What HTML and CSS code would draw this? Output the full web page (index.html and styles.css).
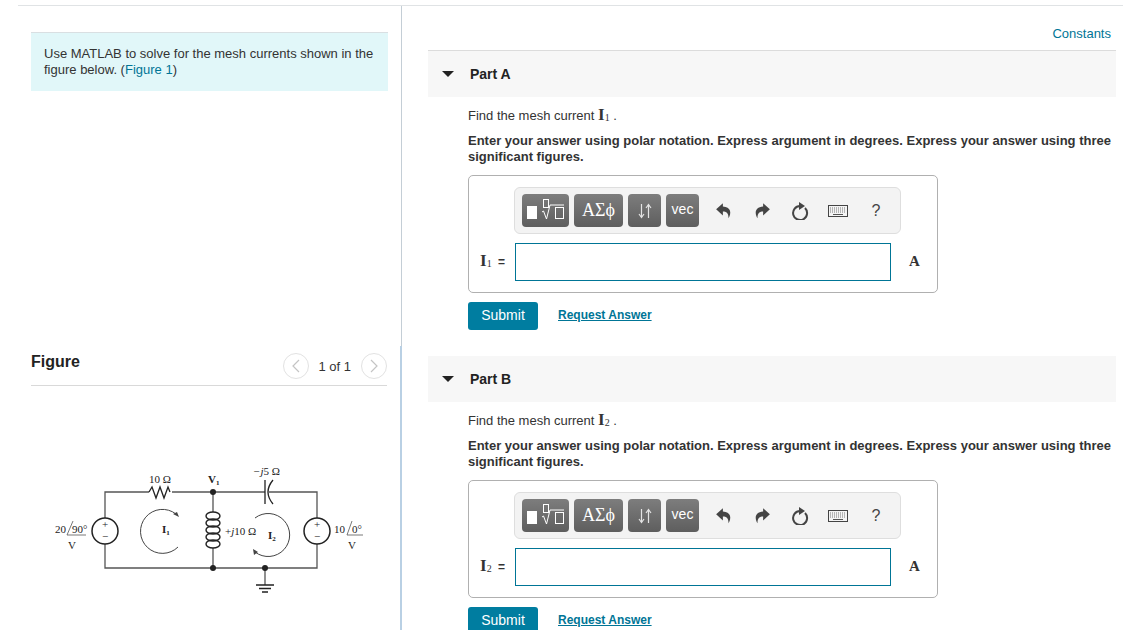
FILE: index.html
```html
<!DOCTYPE html>
<html lang="en">
<head>
  <meta charset="UTF-8" />
  <title>Mesh currents</title>
  <link rel="stylesheet" href="styles.css">
</head>
<body>
  <svg class="sprites" width="0" height="0">
    <defs>
      <symbol id="templates" viewBox="0 0 47 33">
        <rect x="5" y="12" width="10" height="13" fill="#fff"/>
        <rect x="21.500" y="5.500" width="5" height="8" fill="none" stroke="#fff"/>
        <path d="M20 18l1.500-1 3 8 3.500-14h14" fill="none" stroke="#fff"/>
        <rect x="33.500" y="13.500" width="8" height="11" fill="none" stroke="#fff"/>
      </symbol>
      <symbol id="arrows" viewBox="0 0 14 16">
        <path d="M3.500 1v13M1 11l2.500 3.500L6 11M10.500 15V2M8 5l2.500-3.500L13 5" fill="none" stroke="#e4e4e4" stroke-width="1.200"/>
      </symbol>
      <symbol id="undo" viewBox="0 0 16 16">
        <path d="M7 1 1 6.500 7 12V8.500c3 0 5 1 5 6 3-5 2-10-5-10.500z" fill="#444"/>
      </symbol>
      <symbol id="redo" viewBox="0 0 16 16">
        <path d="M9 1l6 5.500L9 12V8.500c-3 0-5 1-5 6-3-5-2-10 5-10.500z" fill="#444"/>
      </symbol>
      <symbol id="reset" viewBox="0 0 18 18">
        <path d="M9 4a7 7 0 1 0 5 2" fill="none" stroke="#444" stroke-width="2"/>
        <path d="M8 0v8l6-4z" fill="#444"/>
      </symbol>
      <symbol id="keyboard" viewBox="0 0 20 12">
        <rect x=".5" y=".5" width="19" height="11" fill="#f4f4f4" stroke="#444"/>
        <path d="M2 3h16M2 5h16M2 7h16" stroke="#777" stroke-dasharray="1 1"/>
        <path d="M5 9.500h10" stroke="#555"/>
      </symbol>
      <symbol id="chev-left" viewBox="0 0 8 14">
        <path d="M7 1 1 7l6 6" fill="none" stroke="#c4c4c4" stroke-width="1.200"/>
      </symbol>
      <symbol id="chev-right" viewBox="0 0 8 14">
        <path d="M1 1l6 6-6 6" fill="none" stroke="#c4c4c4" stroke-width="1.200"/>
      </symbol>
    </defs>
  </svg>

  <div class="page">
    <div class="left">
      <div class="intro-pane">
        <p class="intro">Use MATLAB to solve for the mesh currents shown in the figure below. (<a href="#">Figure 1</a>)</p>
      </div>
      <div class="figure-pane">
        <div class="figure-head">
          <h2>Figure</h2>
          <div class="pager">
            <span class="page-btn"><svg width="8" height="14"><use href="#chev-left"/></svg></span>
            <span class="page-count">1 of 1</span>
            <span class="page-btn"><svg width="8" height="14"><use href="#chev-right"/></svg></span>
          </div>
        </div>
        <!-- viewBox uses the screenshot's own coordinates -->
        <svg class="circuit" width="357" height="150" viewBox="31 460 357 150">
          <g fill="none" stroke="#555" stroke-width="1.300">
            <path d="M105 518V492H149M172 492H265M269 492H317V518M317 544V568H105V544"/>
            <path d="M149 492l3-5 4 11 4-11 4 11 4-11 2 5" stroke="#222"/>
            <path d="M213 492V512M213 548V568M265 568V585"/>
            <path d="M265 480V504" stroke="#222"/>
            <path d="M273 480Q263 492 273 504" stroke="#222"/>
            <g stroke="#222" stroke-width="1.400">
              <ellipse cx="213" cy="516" rx="7" ry="4"/>
              <ellipse cx="213" cy="523" rx="7" ry="4"/>
              <ellipse cx="213" cy="530" rx="7" ry="4"/>
              <ellipse cx="213" cy="537" rx="7" ry="4"/>
              <ellipse cx="213" cy="544" rx="7" ry="4"/>
            </g>
            <circle cx="105" cy="531" r="13" stroke="#222" stroke-width="1.500"/>
            <circle cx="317" cy="531" r="13" stroke="#222" stroke-width="1.500"/>
            <path d="M178 547A22 22 0 1 1 176 514" stroke="#444" stroke-width="1"/>
            <path d="M255 518A21.500 21.500 0 1 1 255 552" stroke="#444" stroke-width="1"/>
            <path d="M256 585h18M259 588.500h12M262 592h6" stroke="#222"/>
            <path d="M73 521l-6 14H86M352 521l-5 14H363" stroke-width=".8"/>
          </g>
          <path d="M179 517l-2-5-4 2zM253 549l1 6 4-3z" fill="#444"/>
          <circle cx="213" cy="492" r="3" fill="#222"/>
          <circle cx="213" cy="568" r="3" fill="#222"/>
          <circle cx="265" cy="568" r="3" fill="#222"/>
          <g class="labels">
            <text x="149" y="483">10 Ω</text>
            <text x="253" y="475"><tspan class="it">−j</tspan>5 Ω</text>
            <text x="55" y="533">20</text>
            <text x="72" y="533">90°</text>
            <text x="68" y="549">V</text>
            <text x="225" y="535">+<tspan class="it">j</tspan>10 Ω</text>
            <text x="334" y="533">10</text>
            <text x="352" y="533">0°</text>
            <text x="348" y="549">V</text>
            <text class="mid" x="105" y="528">+</text>
            <text class="mid" x="317" y="528">+</text>
            <text class="mid" x="105" y="540">−</text>
            <text class="mid" x="317" y="540">−</text>
            <text class="bold" x="208" y="483">V<tspan class="sub" dy="2">1</tspan></text>
            <text class="bold" x="162" y="533">I<tspan class="sub" dy="2">1</tspan></text>
            <text class="bold" x="268" y="539">I<tspan class="sub" dy="2">2</tspan></text>
          </g>
        </svg>
      </div>
    </div>

    <div class="right">
      <div class="constants"><a href="#">Constants</a></div>

      <section class="part">
        <header class="part-head"><span class="caret"></span><h3>Part A</h3></header>
        <div class="part-body">
          <p class="question">Find the mesh current <span class="math">I<sub>1</sub></span> .</p>
          <p class="hint">Enter your answer using polar notation. Express argument in degrees. Express your answer using three significant figures.</p>
          <div class="answer">
            <div class="toolbar">
              <span class="tool tool-templ"><svg width="47" height="33"><use href="#templates"/></svg></span>
              <span class="tool tool-greek">ΑΣϕ</span>
              <span class="tool tool-arrows"><svg width="14" height="16"><use href="#arrows"/></svg></span>
              <span class="tool tool-vec">vec</span>
              <span class="action"><svg width="18" height="18"><use href="#undo"/></svg></span>
              <span class="action"><svg width="18" height="18"><use href="#redo"/></svg></span>
              <span class="action"><svg width="18" height="18"><use href="#reset"/></svg></span>
              <span class="action"><svg width="20" height="12"><use href="#keyboard"/></svg></span>
              <span class="action help">?</span>
            </div>
            <div class="answer-row">
              <span class="math label">I<sub>1</sub> <b>=</b></span>
              <div class="field"></div>
              <span class="unit">A</span>
            </div>
          </div>
          <div class="actions">
            <a class="submit" href="#">Submit</a>
            <a class="request" href="#">Request Answer</a>
          </div>
        </div>
      </section>

      <section class="part">
        <header class="part-head"><span class="caret"></span><h3>Part B</h3></header>
        <div class="part-body">
          <p class="question">Find the mesh current <span class="math">I<sub>2</sub></span> .</p>
          <p class="hint">Enter your answer using polar notation. Express argument in degrees. Express your answer using three significant figures.</p>
          <div class="answer">
            <div class="toolbar">
              <span class="tool tool-templ"><svg width="47" height="33"><use href="#templates"/></svg></span>
              <span class="tool tool-greek">ΑΣϕ</span>
              <span class="tool tool-arrows"><svg width="14" height="16"><use href="#arrows"/></svg></span>
              <span class="tool tool-vec">vec</span>
              <span class="action"><svg width="18" height="18"><use href="#undo"/></svg></span>
              <span class="action"><svg width="18" height="18"><use href="#redo"/></svg></span>
              <span class="action"><svg width="18" height="18"><use href="#reset"/></svg></span>
              <span class="action"><svg width="20" height="12"><use href="#keyboard"/></svg></span>
              <span class="action help">?</span>
            </div>
            <div class="answer-row">
              <span class="math label">I<sub>2</sub> <b>=</b></span>
              <div class="field"></div>
              <span class="unit">A</span>
            </div>
          </div>
          <div class="actions">
            <a class="submit" href="#">Submit</a>
            <a class="request" href="#">Request Answer</a>
          </div>
        </div>
      </section>
    </div>
  </div>
</body>
</html>
```

FILE: styles.css
```css
* {
  margin: 0;
  padding: 0;
  box-sizing: border-box;
}

html, body {
  height: 630px;
  overflow: hidden;
}

body {
  font-family: 'Liberation Sans', Arial, sans-serif;
  font-size: 13px;
  color: #333;
  background: #fff;
  padding: 5px 0 0 18px;
}

a {
  color: #007596;
  text-decoration: none;
}

.sprites {
  display: block;
  height: 0;
}

.page {
  display: flex;
  border-top: 1px solid #e0e3e5;
  height: 625px;
}

/* Left column */
.left {
  width: 384px;
  flex: none;
}

.intro-pane {
  height: 340px;
  padding: 26px 13px 0 13px;
  border-right: 1px solid #c4ced6;
}

.intro {
  width: 357px;
  height: 59px;
  padding: 13px 13px 0;
  line-height: 16px;
  background: #e1f7f9;
  border-top: 1px solid #d9dfe2;
}

.figure-pane {
  height: 285px;
  padding: 0 13px 0 13px;
  border-right: 2px solid #b9d0e4;
}

.figure-head {
  display: flex;
  align-items: center;
  justify-content: space-between;
  height: 40px;
  border-bottom: 1px solid #d9d9d9;
}

.figure-head h2 {
  font-size: 16px;
  color: #222;
  margin-top: -8px;
}

.pager {
  display: flex;
  align-items: center;
  margin-top: 1px;
}

.page-btn {
  display: flex;
  align-items: center;
  justify-content: center;
  width: 26px;
  height: 26px;
  border: 1px solid #e2e2e2;
  border-radius: 50%;
}

.page-count {
  margin: 0 10px 0 9px;
  color: #333;
}

.circuit {
  display: block;
  margin-top: 74px;
}

.labels text {
  font-family: 'Liberation Serif', serif;
  font-size: 11px;
  fill: #222;
}

.labels .bold {
  font-weight: bold;
}

.labels .it {
  font-style: italic;
}

.labels .mid {
  text-anchor: middle;
}

.labels .sub {
  font-size: 7px;
}

/* Right column */
.right {
  width: 688px;
  margin-left: 26px;
  flex: none;
}

.constants {
  height: 45px;
  padding: 20px 5px 0 0;
  text-align: right;
  border-bottom: 1px solid #dcdcdc;
}

.part {
  height: 305px;
}

.part + .part {
  height: 280px;
}

.part-head {
  display: flex;
  align-items: center;
  height: 46px;
  padding-left: 14px;
  background: #f7f7f7;
}

.caret {
  border-left: 6px solid transparent;
  border-right: 6px solid transparent;
  border-top: 6px solid #222;
  margin-right: 16px;
}

.part-head h3 {
  font-size: 14px;
  color: #222;
}

.part-body {
  padding: 10px 0 0 40px;
}

.question {
  line-height: 16px;
  height: 26px;
}

.hint {
  font-weight: bold;
  line-height: 16px;
  width: 648px;
  margin-bottom: 10px;
}

.math {
  font-family: 'Liberation Serif', serif;
  font-weight: bold;
  font-size: 17px;
}

.math sub {
  font-weight: normal;
  font-size: 10px;
  line-height: 0;
  vertical-align: -1px;
}

.answer {
  width: 470px;
  height: 118px;
  padding: 11px 0 0 0;
  border: 1px solid #b0b0b0;
  border-radius: 5px;
}

.toolbar {
  display: flex;
  align-items: center;
  width: 387px;
  height: 47px;
  margin-left: 45px;
  padding-left: 7px;
  background: #f3f3f3;
  border: 1px solid #dedede;
  border-radius: 6px;
}

.tool {
  display: flex;
  align-items: center;
  justify-content: center;
  height: 33px;
  margin-right: 5px;
  border-radius: 4px;
  color: #fff;
  background: linear-gradient(#7d7d7d, #5e5e5e);
}

.tool-templ {
  width: 47px;
}

.tool-greek {
  width: 49px;
  font-family: 'Liberation Serif', 'DejaVu Serif', serif;
  font-size: 18px;
}

.tool-arrows {
  width: 33px;
}

.tool-vec {
  width: 33px;
  font-size: 14px;
  padding-bottom: 3px;
  margin-right: 6px;
}

.action {
  display: flex;
  align-items: center;
  justify-content: center;
  width: 38px;
}

.help {
  font-size: 16px;
  color: #444;
}

.answer-row {
  display: flex;
  align-items: center;
  margin-top: 9px;
}

.label {
  width: 46px;
  padding: 0 0 2px 11px;
  white-space: nowrap;
}

.label b {
  font-family: 'Liberation Sans', sans-serif;
  font-size: 12px;
  margin-left: 2px;
}

.field {
  width: 376px;
  height: 38px;
  border: 1px solid #007596;
}

.unit {
  margin-left: 18px;
  padding-bottom: 2px;
  font-family: 'Liberation Serif', serif;
  font-weight: bold;
  font-size: 15px;
}

.actions {
  display: flex;
  align-items: center;
  margin-top: 9px;
}

.submit {
  width: 70px;
  height: 28px;
  line-height: 27px;
  text-align: center;
  color: #fff;
  font-size: 14px;
  background: #007da0;
  border-radius: 3px;
}

.request {
  margin: 0 0 2px 20px;
  font-size: 12px;
  font-weight: bold;
  text-decoration: underline;
}
```
